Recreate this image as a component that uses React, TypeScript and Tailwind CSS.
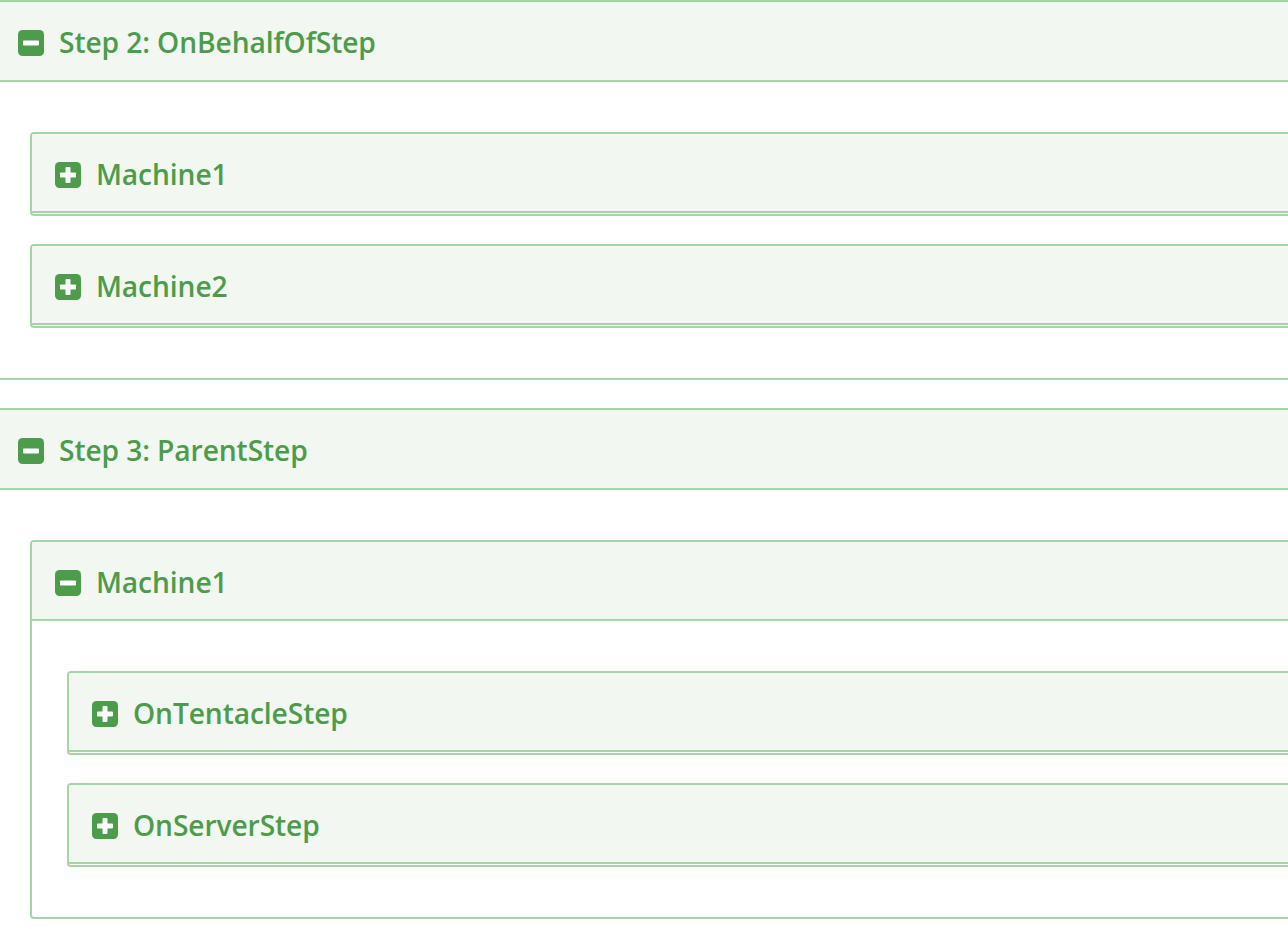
import React from "react";

type Node = {
  title: string;
  open?: boolean;
  children?: Node[];
};

const steps: Node[] = [
  {
    title: "Step 2: OnBehalfOfStep",
    open: true,
    children: [{ title: "Machine1" }, { title: "Machine2" }],
  },
  {
    title: "Step 3: ParentStep",
    open: true,
    children: [
      {
        title: "Machine1",
        open: true,
        children: [{ title: "OnTentacleStep" }, { title: "OnServerStep" }],
      },
    ],
  },
];

// square plus / minus toggle, drawn like the font-awesome glyph
const ToggleIcon = ({ open }: { open?: boolean }) => (
  <svg width="26" height="26" viewBox="0 0 26 26" className="shrink-0">
    <rect x="0" y="0" width="26" height="26" rx="4.5" fill="#4c9c4c" />
    <rect x="5" y="10.5" width="16" height="5" rx="1" fill="#ffffff" />
    {!open && <rect x="10.5" y="5" width="5" height="16" rx="1" fill="#ffffff" />}
  </svg>
);

const Heading = ({ node, outer }: { node: Node; outer?: boolean }) => (
  <div
    className={`flex items-center gap-[15px] bg-[#f2f8f1] border-b-2 border-[#a5d4a6] px-[23px] pt-[4px] ${
      outer ? "h-[80px]" : "h-[79px]"
    }`}
  >
    <ToggleIcon open={node.open} />
    <span className="text-[28.2px] font-semibold text-[#4c9c4c] leading-none tracking-[-0.1px] pb-[1px]">
      {node.title}
    </span>
  </div>
);

const Panel = ({ node, outer }: { node: Node; outer?: boolean }) => (
  <div
    className={
      outer
        ? "border-2 border-[#a5d4a6] ml-[-7px] bg-white"
        : "border-2 border-[#a5d4a6] rounded-[4px] bg-white overflow-hidden"
    }
  >
    <Heading node={node} outer={outer} />
    {node.open && node.children ? (
      <div className="flex flex-col gap-[28px] px-[35px] pt-[50px] pb-[50px]">
        {node.children.map((child, i) => (
          <Panel key={i} node={child} />
        ))}
      </div>
    ) : (
      <div className="h-[1px]" />
    )}
  </div>
);

export default function App() {
  return (
    <div
      className="w-[1288px] h-[929px] overflow-hidden bg-white"
      style={{ fontFamily: '"Open Sans", "Noto Sans", sans-serif' }}
    >
      <div className="w-[1500px] flex flex-col gap-[28px]">
        {steps.map((step, i) => (
          <Panel key={i} node={step} outer />
        ))}
      </div>
    </div>
  );
}
